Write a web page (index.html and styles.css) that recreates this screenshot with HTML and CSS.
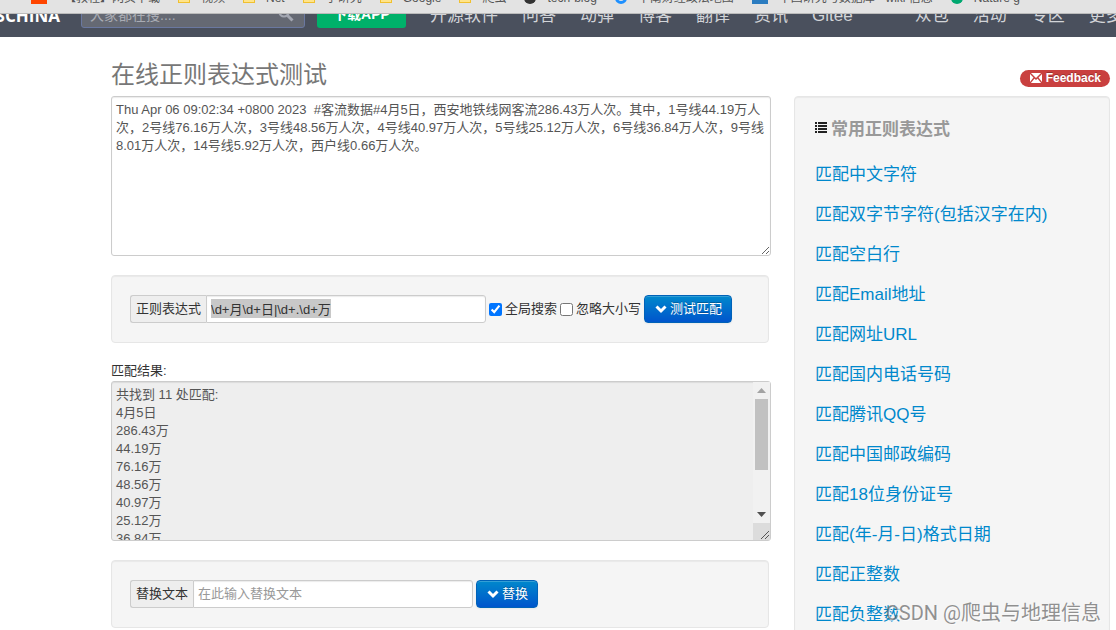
FILE: index.html
```html
<!DOCTYPE html>
<html lang="zh-CN">
<head>
    <meta charset="UTF-8" />
    <meta name="viewport" content="width=device-width, initial-scale=1.0"/>
    <title>在线正则表达式测试</title>

    <link rel="stylesheet" href="styles.css">
</head>
<body>

<!-- 书签栏 -->
<div class="bookmarks">
    <div class="bookmarks-inner">
        <span class="bookmark"><i class="fav fav-red"></i>【教程】网页下载</span>
        <span class="bookmark"><i class="fav fav-folder"></i>视频</span>
        <span class="bookmark"><i class="fav fav-folder"></i>Net</span>
        <span class="bookmark"><i class="fav fav-folder"></i>学研究</span>
        <span class="bookmark"><i class="fav fav-folder"></i>Google</span>
        <span class="bookmark"><i class="fav fav-folder"></i>爬虫</span>
        <span class="bookmark"><i class="fav fav-dark"></i>tech-blog</span>
        <span class="bookmark"><i class="fav fav-blue"></i>中南财经政法地图</span>
        <span class="bookmark"><i class="fav fav-search"></i>中国研究与数据库 - wiki 信息</span>
        <span class="bookmark"><i class="fav fav-green"></i>Nature g</span>
    </div>
</div>

<!-- 顶部导航 -->
<header class="navbar">
    <div class="navbar-inner">
        <a class="logo" href="#">OSCHINA</a>
        <div class="search">
            <input type="text" aria-label="搜索" placeholder="大家都在搜...."/>
            <svg width="16" height="16" viewBox="0 0 16 16"><circle cx="6" cy="6" r="4.5" fill="none" stroke="#a3a7b2" stroke-width="2.2"/><path d="M9.5 9.5l5 5" stroke="#a3a7b2" stroke-width="3"/></svg>
        </div>
        <a class="download" href="#">下载APP</a>
        <nav class="nav">
            <a href="#">开源软件</a>
            <a href="#">问答</a>
            <a href="#">动弹</a>
            <a href="#">博客</a>
            <a href="#">翻译</a>
            <a href="#">资讯</a>
            <a href="#">Gitee</a>
        </nav>
        <nav class="nav nav-more">
            <a href="#">众包</a>
            <a href="#">活动</a>
            <a href="#">专区</a>
            <a href="#">更多</a>
        </nav>
    </div>
</header>

<div class="container">

    <main>
        <h1>在线正则表达式测试</h1>
        <textarea id="source" aria-label="待匹配文本">Thu Apr 06 09:02:34 +0800 2023  #客流数据#4月5日，西安地铁线网客流286.43万人次。其中，1号线44.19万人次，2号线76.16万人次，3号线48.56万人次，4号线40.97万人次，5号线25.12万人次，6号线36.84万人次，9号线8.01万人次，14号线5.92万人次，西户线0.66万人次。</textarea>

        <form class="well form-row">
            <div class="prepend">
                <label for="regex">正则表达式</label>
                <input type="text" id="regex" value="\d+月\d+日|\d+.\d+万" autocomplete="off" spellcheck="false"/>
            </div>
            <label class="check"><input type="checkbox" checked/>全局搜索</label>
            <label class="check"><input type="checkbox"/>忽略大小写</label>
            <button type="button" class="btn" id="matchBtn">
                <svg width="14" height="14" viewBox="0 0 14 14"><path d="M2.5 4.5l4.5 4.5 4.5-4.5" fill="none" stroke="#fff" stroke-width="3"/></svg>
                测试匹配
            </button>
        </form>

        <label class="result-label" for="result">匹配结果:</label>
        <div class="result-box">
            <textarea id="result" readonly>共找到 11 处匹配:
4月5日
286.43万
44.19万
76.16万
48.56万
40.97万
25.12万
36.84万
8.01万
5.92万
0.66万</textarea>
            <!-- 滚动条 -->
            <div class="scrollbar" aria-hidden="true">
                <svg width="17" height="17" viewBox="0 0 17 17"><path d="M4 11h9L8.500 6z" fill="#a3a3a3"/></svg>
                <div class="scroll-track"><div class="scroll-thumb"></div></div>
                <svg width="17" height="17" viewBox="0 0 17 17"><path d="M4 6h9L8.500 11z" fill="#505050"/></svg>
                <svg class="scroll-corner" width="17" height="17" viewBox="0 0 17 17"><path d="M8 16l8-8M12 16l4-4" stroke="#555" stroke-width="1"/></svg>
            </div>
        </div>

        <form class="well form-row">
            <div class="prepend">
                <label for="replace">替换文本</label>
                <input type="text" id="replace" placeholder="在此输入替换文本"/>
            </div>
            <button type="button" class="btn">
                <svg width="14" height="14" viewBox="0 0 14 14"><path d="M2.5 4.5l4.5 4.5 4.5-4.5" fill="none" stroke="#fff" stroke-width="3"/></svg>
                替换
            </button>
        </form>
    </main>

    <aside>
        <a class="feedback" href="#">
            <svg width="12" height="10" viewBox="0 0 12 10"><path d="M0 0h12v10H0z" fill="#fff"/><path d="M0 0l6 6 6-6M0 10l4-5M12 10L8 5" fill="none" stroke="#c9403f" stroke-width="1.4"/></svg>
            Feedback
        </a>
        <div class="well sidebar">
            <h2>
                <svg width="12" height="11" viewBox="0 0 12 11"><path d="M0 0h2v2H0zM3 0h9v2H3zM0 3h2v2H0zM3 3h9v2H3zM0 6h2v2H0zM3 6h9v2H3zM0 9h2v2H0zM3 9h9v2H3z" fill="#222"/></svg>
                常用正则表达式
            </h2>
            <ul>
                <li><a href="#">匹配中文字符</a></li>
                <li><a href="#">匹配双字节字符(包括汉字在内)</a></li>
                <li><a href="#">匹配空白行</a></li>
                <li><a href="#">匹配Email地址</a></li>
                <li><a href="#">匹配网址URL</a></li>
                <li><a href="#">匹配国内电话号码</a></li>
                <li><a href="#">匹配腾讯QQ号</a></li>
                <li><a href="#">匹配中国邮政编码</a></li>
                <li><a href="#">匹配18位身份证号</a></li>
                <li><a href="#">匹配(年-月-日)格式日期</a></li>
                <li><a href="#">匹配正整数</a></li>
                <li><a href="#">匹配负整数</a></li>
            </ul>
        </div>
    </aside>

</div>

<div class="watermark">CSDN @爬虫与地理信息</div>

<script>
    const regexInput = document.getElementById('regex');
    regexInput.focus();
    regexInput.select();
</script>

</body>
</html>
```
FILE: styles.css
```css
* {
    box-sizing: border-box;
}

body {
    margin: 0;
    height: 100vh;
    overflow: hidden;
    display: flex;
    flex-direction: column;
    font-family: "Liberation Sans", "Noto Sans CJK SC", sans-serif;
    font-size: 13px;
    line-height: 18px;
    color: #333;
    background: #fff;
}

a {
    color: #08c;
    text-decoration: none;
}

input, textarea, button {
    font-family: inherit;
    font-size: 13px;
    line-height: 18px;
    margin: 0;
}

/* 书签栏 */
.bookmarks {
    flex: none;
    height: 14px;
    overflow: hidden;
    display: flex;
    align-items: flex-end;
    background: #e3e3e3;
    border-bottom: 1px solid #bbb;
}

.bookmarks-inner {
    flex: none;
    height: 31px;
    display: flex;
    align-items: center;
    gap: 18px;
    padding-left: 31px;
    font-size: 12px;
    color: #555;
    white-space: nowrap;
}

.bookmark {
    display: flex;
    align-items: center;
    gap: 11px;
}

.fav {
    width: 12px;
    height: 10px;
}

.fav-folder {
    background: #ffe48a;
    border: 1px solid #f0c030;
}

.fav-red {
    width: 16px;
    height: 12px;
    margin-right: 6px;
    background: #ff4500;
}

.fav-dark {
    height: 12px;
    border-radius: 6px;
    background: #333;
}

.fav-blue {
    height: 12px;
    border: 3px solid #1e90ff;
    border-radius: 6px;
}

.fav-search {
    width: 16px;
    height: 12px;
    background: #2b7cc0;
}

.fav-green {
    height: 12px;
    border-radius: 6px;
    background: #00a870;
}

/* 顶部导航 */
.navbar {
    flex: none;
    height: 23px;
    overflow: hidden;
    display: flex;
    align-items: flex-end;
    background: #4a505d;
}

.navbar-inner {
    flex: none;
    height: 46px;
    display: flex;
    align-items: center;
    white-space: nowrap;
}

.logo {
    width: 60px;
    display: flex;
    justify-content: flex-end;
    color: #fff;
    font-family: "Open Sans", sans-serif;
    font-size: 17px;
    font-weight: 700;
    line-height: 20px;
    padding-top: 4px;
}

.search {
    width: 224px;
    height: 28px;
    margin-left: 21px;
    padding: 0 10px 0 8px;
    display: flex;
    align-items: center;
    background: #656973;
    border: 1px solid #6a78a0;
    border-radius: 3px;
}

.search input {
    flex: 1;
    min-width: 0;
    padding: 2px 0 0;
    border: 0;
    background: none;
    font-size: 14px;
}

.search input::placeholder {
    color: #a9acb4;
}

.download {
    width: 89px;
    height: 28px;
    margin-left: 12px;
    border-radius: 3px;
    background: #00b16a;
    color: #fff;
    font-size: 14px;
    font-weight: 700;
    line-height: 28px;
    text-align: center;
}

.nav {
    display: flex;
    gap: 24px;
    margin-left: 24px;
    padding-top: 4px;
    font-size: 17px;
    line-height: 24px;
}

.nav a {
    color: #d2d4d8;
}

.nav-more {
    margin-left: 62px;
}

/* 主体两栏 */
.container {
    display: grid;
    grid-template-columns: 660fr 316fr;
    gap: 23px;
    padding: 0 6px 0 111px;
}

h1 {
    margin: 0;
    padding: 20px 0 3px;
    font-size: 24px;
    font-weight: 400;
    line-height: 36px;
    color: #777;
}

textarea {
    display: block;
    width: 100%;
    height: 160px;
    padding: 4px;
    border: 1px solid #ccc;
    border-radius: 3px;
    color: #555;
    background: #fff;
    box-shadow: inset 0 1px 1px rgba(0,0,0,0.08);
    resize: both;
    outline: none;
}

textarea[readonly] {
    background: #eee;
    resize: none;
}

.result-box {
    position: relative;
}

.scrollbar {
    position: absolute;
    top: 1px;
    right: 1px;
    bottom: 1px;
    width: 17px;
    display: flex;
    flex-direction: column;
    background: #f1f1f1;
}

.scroll-track {
    flex: 1;
    padding: 0 2px;
}

.scroll-thumb {
    height: 66%;
    background: #c1c1c1;
}

.scroll-corner {
    background: #dcdcdc;
}

.well {
    padding: 19px;
    background: #f5f5f5;
    border: 1px solid #e6e6e6;
    border-radius: 4px;
    box-shadow: inset 0 1px 1px rgba(0,0,0,0.05);
}

.form-row {
    display: flex;
    align-items: center;
    gap: 3px;
    margin: 19px 2px 19px 0;
    padding-left: 18px;
}

.prepend {
    display: flex;
}

.prepend label {
    height: 28px;
    padding: 4px 5px;
    background: #eee;
    border: 1px solid #ccc;
    border-right: 0;
    border-radius: 3px 0 0 3px;
    white-space: nowrap;
}

.prepend input {
    width: 280px;
    height: 28px;
    padding: 3px 4px 5px;
    border: 1px solid #ccc;
    border-radius: 0 3px 3px 0;
    color: #333;
    background: #fff;
    box-shadow: inset 0 1px 1px rgba(0,0,0,0.08);
    outline: none;
}

.prepend input::selection {
    color: #333;
    background: #c8c8c8;
}

.prepend input::placeholder {
    color: #999;
}

.check {
    display: flex;
    align-items: center;
    gap: 3px;
    white-space: nowrap;
}

.check input {
    width: 13px;
    height: 13px;
}

.btn {
    display: flex;
    align-items: center;
    gap: 2px;
    height: 28px;
    padding: 0 9px;
    border: 1px solid #0062b8;
    border-radius: 4px;
    color: #fff;
    background: linear-gradient(#0088cc, #0055cc);
    box-shadow: inset 0 1px 0 rgba(255,255,255,0.2), 0 1px 2px rgba(0,0,0,0.05);
    text-shadow: 0 -1px 0 rgba(0,0,0,0.25);
    white-space: nowrap;
    cursor: pointer;
}

.result-label {
    display: block;
    padding-bottom: 1px;
}

/* 右侧栏 */
aside {
    display: flex;
    flex-direction: column;
    align-items: flex-end;
}

.feedback {
    display: flex;
    align-items: center;
    gap: 4px;
    height: 17px;
    margin: 33px 0 9px;
    padding: 0 9px 1px 10px;
    border-radius: 9px;
    background: #c9403f;
    color: #fff;
    font-size: 12px;
    font-weight: 700;
    line-height: 16px;
    text-shadow: 0 -1px 0 rgba(0,0,0,0.25);
}

.sidebar {
    width: 100%;
    padding: 20px;
    font-size: 17px;
}

.sidebar h2 {
    display: flex;
    align-items: center;
    gap: 4px;
    margin: 0 0 12px;
    font-size: 17px;
    line-height: 26px;
    color: #999;
}

.sidebar h2 svg {
    margin-bottom: 6px;
}

.sidebar ul {
    margin: 0;
    padding: 0;
    list-style: none;
    line-height: 40px;
}

.watermark {
    position: absolute;
    right: 15px;
    bottom: 4px;
    font-family: Roboto, "Noto Sans CJK SC", sans-serif;
    font-size: 20px;
    line-height: 26px;
    color: rgba(110,110,110,0.75);
    text-shadow: 1px 1px 0 rgba(255,255,255,0.7);
}
```
